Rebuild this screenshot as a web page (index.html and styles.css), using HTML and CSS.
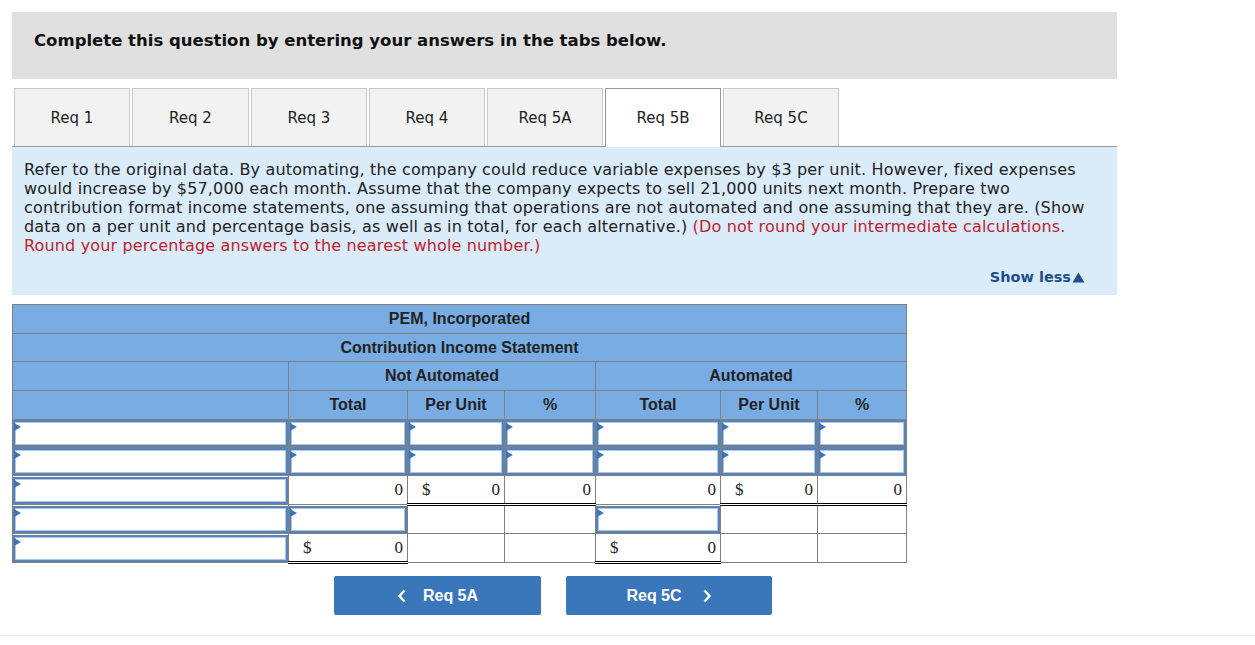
FILE: index.html
```html
<!DOCTYPE html>
<html>
<head>
<meta charset="utf-8">
<link rel="stylesheet" href="styles.css">
</head>
<body>
<div class="wrap">
  <div class="banner">Complete this question by entering your answers in the tabs below.</div>
  <div class="tabs">
    <div class="tab">Req 1</div>
    <div class="tab wide">Req 2</div>
    <div class="tab">Req 3</div>
    <div class="tab">Req 4</div>
    <div class="tab">Req 5A</div>
    <div class="tab active">Req 5B</div>
    <div class="tab">Req 5C</div>
  </div>
  <div class="prompt">
    <p class="ptext">Refer to the original data. By automating, the company could reduce variable expenses by $3 per unit. However, fixed expenses would increase by $57,000 each month. Assume that the company expects to sell 21,000 units next month. Prepare two contribution format income statements, one assuming that operations are not automated and one assuming that they are. (Show data on a per unit and percentage basis, as well as in total, for each alternative.) <span class="red">(Do not round your intermediate calculations.</span> <span class="red">Round your percentage answers to the nearest whole number.)</span></p>
    <div class="showless">Show less<svg class="tri" width="13" height="11" viewBox="0 0 13 11"><polygon points="6.5,0.5 12.5,10.5 0.5,10.5" fill="#1d4f8a"/></svg></div>
  </div>
  <table class="stmt">
    <colgroup>
      <col class="c0"><col class="c1"><col class="c2"><col class="c3"><col class="c4"><col class="c5"><col class="c6">
    </colgroup>
    <tr class="hr h1"><th colspan="7">PEM, Incorporated</th></tr>
    <tr class="hr h2"><th colspan="7">Contribution Income Statement</th></tr>
    <tr class="hr h3"><th></th><th colspan="3">Not Automated</th><th colspan="3">Automated</th></tr>
    <tr class="hr h4"><th></th><th>Total</th><th>Per Unit</th><th>%</th><th>Total</th><th>Per Unit</th><th>%</th></tr>
    <tr class="dr">
      <td class="inp"><div class="box"></div></td>
      <td class="inp"><div class="box"></div></td>
      <td class="inp"><div class="box"></div></td>
      <td class="inp"><div class="box"></div></td>
      <td class="inp"><div class="box"></div></td>
      <td class="inp"><div class="box"></div></td>
      <td class="inp"><div class="box"></div></td>
    </tr>
    <tr class="dr">
      <td class="inp"><div class="box"></div></td>
      <td class="inp"><div class="box"></div></td>
      <td class="inp"><div class="box"></div></td>
      <td class="inp"><div class="box"></div></td>
      <td class="inp"><div class="box"></div></td>
      <td class="inp"><div class="box"></div></td>
      <td class="inp"><div class="box"></div></td>
    </tr>
    <tr class="dr">
      <td class="inp"><div class="box"></div></td>
      <td class="num top"><div class="val"><span></span><span>0</span></div></td>
      <td class="num top dbl"><div class="val"><span class="dol">$</span><span>0</span></div></td>
      <td class="num top dbl"><div class="val"><span></span><span>0</span></div></td>
      <td class="num top"><div class="val"><span></span><span>0</span></div></td>
      <td class="num top dbl"><div class="val"><span class="dol">$</span><span>0</span></div></td>
      <td class="num top dbl"><div class="val"><span></span><span>0</span></div></td>
    </tr>
    <tr class="dr">
      <td class="inp"><div class="box"></div></td>
      <td class="inp"><div class="box"></div></td>
      <td class="plain"></td>
      <td class="plain"></td>
      <td class="inp"><div class="box"></div></td>
      <td class="plain"></td>
      <td class="plain"></td>
    </tr>
    <tr class="dr">
      <td class="inp"><div class="box"></div></td>
      <td class="num top dbl"><div class="val"><span class="dol">$</span><span>0</span></div></td>
      <td class="plain"></td>
      <td class="plain"></td>
      <td class="num top dbl"><div class="val"><span class="dol">$</span><span>0</span></div></td>
      <td class="plain"></td>
      <td class="plain"></td>
    </tr>
  </table>
  <div class="nav">
    <div class="btn"><svg class="chev" width="10" height="14" viewBox="0 0 10 14"><polyline points="7.5,1.5 2.5,7 7.5,12.5" fill="none" stroke="#fff" stroke-width="2.4"/></svg><span>Req 5A</span></div>
    <div class="btn next"><span>Req 5C</span><svg class="chev" width="10" height="14" viewBox="0 0 10 14"><polyline points="2.5,1.5 7.5,7 2.5,12.5" fill="none" stroke="#fff" stroke-width="2.4"/></svg></div>
  </div>
</div>
<div class="footline"></div>
</body>
</html>
```
FILE: styles.css
```css
html, body { margin: 0; padding: 0; background: #fff; }
body { font-family: "DejaVu Sans", Verdana, sans-serif; color: #222; }
.wrap { padding: 12px 0 0 12px; width: 1105px; }

.banner {
  background: #e0e0e0;
  height: 67px;
  box-sizing: border-box;
  padding: 19px 0 0 22px;
  font-weight: bold;
  font-size: 16.5px;
  color: #111;
}

.tabs {
  margin-top: 9px;
  display: flex;
  gap: 2px;
  padding-left: 2px;
  border-bottom: 1px solid #9a9a9a;
  height: 58px;
}
.tab {
  width: 116px;
  height: 58px;
  box-sizing: border-box;
  background: #f2f2f2;
  border: 1px solid #c8c8c8;
  border-bottom: none;
  display: flex;
  align-items: center;
  justify-content: center;
  font-size: 15px;
  color: #222;
}
.tab.wide { width: 117px; }
.tab.active {
  background: #fff;
  border-color: #9a9a9a;
  height: 59px;
  position: relative;
  z-index: 1;
}

.prompt {
  background: #daebf9;
  height: 148px;
  box-sizing: border-box;
  padding: 13px 12px 0 12px;
}
.ptext {
  margin: 0;
  font-size: 16px;
  letter-spacing: 0.16px;
  line-height: 19px;
  color: #222;
}
.red { color: #c0222c; }
.showless {
  display: flex;
  justify-content: flex-end;
  align-items: center;
  gap: 1px;
  margin-top: 14px;
  font-weight: bold;
  font-size: 14.5px;
  color: #1d4f8a;
  padding-right: 20px;
}
.tri { display: block; }

.stmt {
  margin-top: 9px;
  border-collapse: collapse;
  width: 894px;
  table-layout: fixed;
  font-family: "Liberation Sans", Arial, sans-serif;
  border: 1px solid #777;
}
.c0 { width: 276px; }
.c1 { width: 119px; }
.c2 { width: 97px; }
.c3 { width: 91px; }
.c4 { width: 125px; }
.c5 { width: 97px; }
.c6 { width: 89px; }

.hr th {
  background: #79ace3;
  border: 1px solid #808080;
  font-size: 16px;
  font-weight: bold;
  color: #222;
  padding: 0;
  text-align: center;
}
.h1 th { height: 28px; }
.h2 th { height: 27px; }
.h3 th { height: 28px; }
.h4 th { height: 28px; }

.dr td { height: 27px; padding: 0; border: 1px solid #808080; }
.box {
  height: 27px;
  box-sizing: border-box;
  border: 2px solid #5a82b3;
  box-shadow: inset 0 0 0 1px #a9c7ec;
  background: #fff;
  position: relative;
}
.box::before {
  content: "";
  position: absolute;
  left: -1px;
  top: 1px;
  border-left: 7px solid #3b74b9;
  border-top: 4px solid transparent;
  border-bottom: 4px solid transparent;
}
td.num {
  font-family: "Liberation Serif", "Times New Roman", serif;
  font-size: 17px;
  color: #222;
}
.dr td.top { border-top: 1px solid #000; }
.dr td.dbl { border-bottom: 3px double #000; }
.val {
  display: flex;
  justify-content: space-between;
  line-height: 20px;
  padding: 0 4px 0 14px;
}

.nav {
  margin-top: 12px;
  padding-left: 322px;
  display: flex;
  gap: 25px;
}
.btn {
  width: 207px;
  height: 39px;
  background: #3a76ba;
  border-radius: 2px;
  color: #fff;
  font-family: "Liberation Sans", Arial, sans-serif;
  font-weight: bold;
  font-size: 16px;
  display: flex;
  align-items: center;
  justify-content: center;
  gap: 16px;
}
.btn.next { width: 206px; gap: 20px; }
.chev { display: block; }

.footline {
  margin-top: 20px;
  border-top: 1px solid #ececec;
  height: 8px;
}
```
